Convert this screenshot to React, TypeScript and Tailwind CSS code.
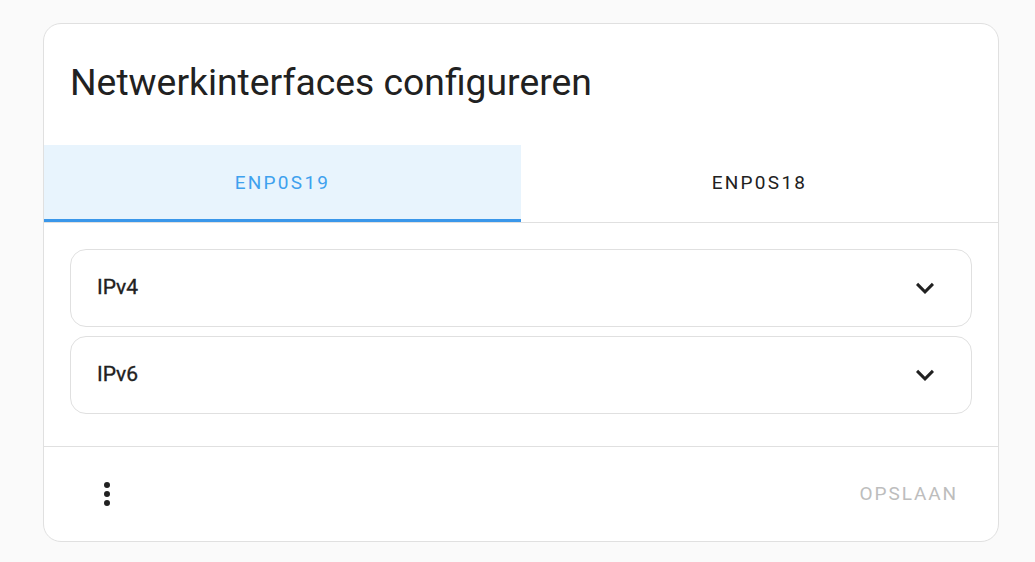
import { useState } from "react";

const tabs = ["enp0s19", "enp0s18"];
const sections = ["IPv4", "IPv6"];

function ChevronDown() {
  return (
    <svg viewBox="0 0 24 24" className="h-9 w-9" fill="#212121">
      <path d="M7.41,8.58L12,13.17L16.59,8.58L18,10L12,16L6,10L7.41,8.58Z" />
    </svg>
  );
}

function DotsVertical() {
  return (
    <svg viewBox="0 0 24 24" className="h-9 w-9" fill="#212121">
      <path d="M12,16A2,2 0 0,1 14,18A2,2 0 0,1 12,20A2,2 0 0,1 10,18A2,2 0 0,1 12,16M12,10A2,2 0 0,1 14,12A2,2 0 0,1 12,14A2,2 0 0,1 10,12A2,2 0 0,1 12,10M12,4A2,2 0 0,1 14,6A2,2 0 0,1 12,8A2,2 0 0,1 10,6A2,2 0 0,1 12,4Z" />
    </svg>
  );
}

export default function App() {
  const [active, setActive] = useState(0);

  return (
    <div
      className="min-h-[562px] bg-[#fafafa] pt-[23px] pl-[43px]"
      style={{ fontFamily: "Roboto, 'Noto Sans', sans-serif" }}
    >
      <div className="w-[956px] h-[519px] bg-white border border-[#e0e0e0] rounded-[18px] overflow-hidden flex flex-col">
        {/* titel */}
        <div className="px-[26px] pt-[36px] pb-[41px]">
          <h2 className="text-[37.3px] leading-[44px] text-[#212121] font-normal">
            Netwerkinterfaces configureren
          </h2>
        </div>

        {/* tabs */}
        <div className="flex border-b border-[#e0e0e0]">
          {tabs.map((tab, i) => (
            <button
              key={tab}
              onClick={() => setActive(i)}
              className={
                i === active
                  ? "flex-1 h-[77px] pt-[3px] flex items-center justify-center uppercase text-[19px] font-normal tracking-[0.12em] text-[#3ea1ee] bg-[#e8f4fd] border-b-[3px] border-[#3a97ea]"
                  : "flex-1 h-[77px] flex items-center justify-center uppercase text-[19px] font-normal tracking-[0.12em] text-[#212121] bg-white"
              }
            >
              {tab}
            </button>
          ))}
        </div>

        {/* secties */}
        <div className="px-[26px] pt-[26px] pb-[32px] flex flex-col gap-[9px] border-b border-[#e0e0e0]">
          {sections.map((s) => (
            <div
              key={s}
              className="h-[78px] rounded-[16px] border border-[#e0e0e0] flex items-center justify-between pl-[26px] pr-[28px]"
            >
              <span className="text-[21px] font-normal text-[#212121] [-webkit-text-stroke:0.35px_#212121]">
                {s}
              </span>
              <ChevronDown />
            </div>
          ))}
        </div>

        {/* footer */}
        <div className="flex-1 flex items-center justify-between pl-[45px] pr-[40px]">
          <button className="flex items-center justify-center">
            <DotsVertical />
          </button>
          <button className="uppercase text-[19px] font-normal tracking-[0.1em] text-[#bdbdbd]">
            Opslaan
          </button>
        </div>
      </div>
    </div>
  );
}
